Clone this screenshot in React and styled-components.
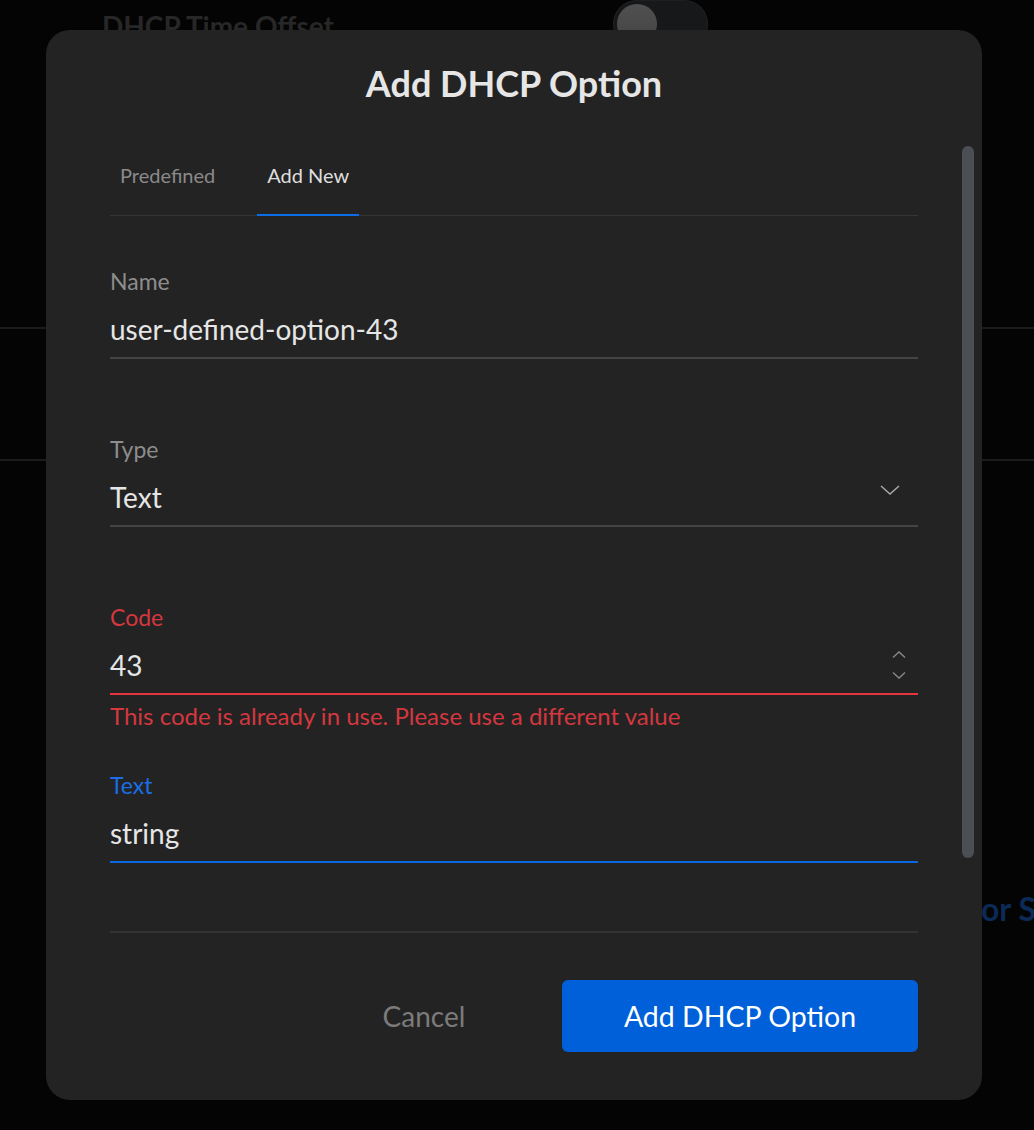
import React from "react";
import styled, { createGlobalStyle } from "styled-components";

const GlobalStyle = createGlobalStyle`
  html, body {
    margin: 0;
    padding: 0;
    background: #000;
    font-family: Lato, "Open Sans", sans-serif;
  }
  * { box-sizing: border-box; }
`;

const Screen = styled.div`
  position: relative;
  width: 1034px;
  height: 1130px;
  overflow: hidden;
  background: #040404;
`;

/* background page (dimmed) */
const Page = styled.div`
  display: flex;
  flex-direction: column;
  padding-left: 102px;
`;

const SettingRow = styled.div`
  display: flex;
  align-items: center;
  height: 48px;
`;

const SettingTitle = styled.div`
  width: 511px;
  font-size: 28px;
  font-weight: 700;
  color: #272727;
  margin-top: 3px;
`;

const Toggle = styled.div`
  position: relative;
  width: 95px;
  height: 48px;
  border-radius: 24px;
  background: #17181a;
  box-shadow: inset 0 0 0 1px #1e1f21;
`;

const Knob = styled.div`
  position: absolute;
  left: 4px;
  top: 4px;
  width: 40px;
  height: 40px;
  border-radius: 50%;
  background: linear-gradient(180deg, #505050, #444);
`;

const PageDivider = styled.div`
  height: 2px;
  background: #1b1b1b;
  margin-top: ${(p) => p.$top}px;
  margin-left: -102px;
`;

const PageLink = styled.div`
  margin-top: 429px;
  margin-left: 806px;
  white-space: nowrap;
  font-size: 32px;
  line-height: 38px;
  font-weight: 700;
  color: #0b2a55;
`;

/* modal */
const Dialog = styled.div`
  position: absolute;
  left: 46px;
  top: 30px;
  width: 936px;
  height: 1070px;
  border-radius: 24px;
  background: #232323;
  display: flex;
  flex-direction: column;
  padding: 33px 64px 48px;
`;

const Title = styled.h2`
  margin: 0;
  text-align: center;
  font-size: 36px;
  line-height: 40px;
  font-weight: 700;
  color: #e6e6e6;
`;

const ScrollThumb = styled.div`
  position: absolute;
  left: 916px;
  top: 116px;
  width: 12px;
  height: 712px;
  border-radius: 6px;
  background: #4b4e55;
`;

const Tabs = styled.div`
  display: flex;
  gap: 32px;
  margin-top: 60px;
  border-bottom: 1px solid #343434;
`;

const Tab = styled.div`
  padding: 0 10px 27px;
  font-size: 20px;
  line-height: 24px;
  color: ${(p) => (p.$active ? "#dedede" : "#8a8a8a")};
  border-bottom: 2px solid ${(p) => (p.$active ? "#0b6ee8" : "transparent")};
  margin-bottom: -1px;
`;

const Form = styled.div`
  display: flex;
  flex-direction: column;
  margin-top: 53px;
`;

const Field = styled.div`
  display: flex;
  flex-direction: column;
`;

const Label = styled.div`
  font-size: 23px;
  line-height: 24px;
  color: ${(p) => p.$color || "#8d8d8d"};
`;

const InputRow = styled.div`
  display: flex;
  align-items: center;
  margin-top: 20px;
  height: 46px;
  padding-bottom: 12px;
  border-bottom: 2px solid ${(p) => p.$line || "#444"};
`;

const Value = styled.div`
  flex: 1;
  font-size: 28px;
  line-height: 32px;
  color: #e6e6e6;
`;

const Helper = styled.div`
  height: 78px;
  padding-top: 9px;
  font-size: 24px;
  line-height: 24px;
  color: #d4373f;
`;

const Chevron = styled.svg`
  width: 20px;
  height: 10px;
  margin-right: 18px;
  margin-top: -14px;
`;

const Spinner = styled.div`
  display: flex;
  flex-direction: column;
  gap: 14px;
  margin-right: 12px;
`;

const Arrow = styled.svg`
  width: 14px;
  height: 7px;
  display: block;
`;

const FooterRule = styled.div`
  height: 2px;
  background: #333;
  margin-top: -10px;
`;

const Footer = styled.div`
  display: flex;
  justify-content: flex-end;
  align-items: center;
  gap: 40px;
  margin-top: 47px;
`;

const CancelButton = styled.button`
  width: 196px;
  height: 72px;
  border: none;
  background: transparent;
  font-family: inherit;
  font-size: 28px;
  color: #7b7b7b;
`;

const PrimaryButton = styled.button`
  width: 356px;
  height: 72px;
  border: none;
  border-radius: 6px;
  background: #0060d9;
  font-family: inherit;
  font-size: 28.5px;
  color: #fff;
`;

export default function App() {
  return (
    <>
      <GlobalStyle />
      <Screen>
        <Page>
          <SettingRow>
            <SettingTitle>DHCP Time Offset</SettingTitle>
            <Toggle>
              <Knob />
            </Toggle>
          </SettingRow>
          <PageDivider $top={279} />
          <PageDivider $top={130} />
          <PageLink>Vendor Settings</PageLink>
        </Page>

        <Dialog>
          <Title>Add DHCP Option</Title>
          <ScrollThumb />
          <Tabs>
            <Tab>Predefined</Tab>
            <Tab $active>Add New</Tab>
          </Tabs>
          <Form>
            <Field>
              <Label>Name</Label>
              <InputRow>
                <Value>user-defined-option-43</Value>
              </InputRow>
              <Helper />
            </Field>
            <Field>
              <Label>Type</Label>
              <InputRow>
                <Value>Text</Value>
                <Chevron viewBox="0 0 20 10" fill="none">
                  <path d="M1 1 L10 9 L19 1" stroke="#a8a8a8" strokeWidth="1.5" />
                </Chevron>
              </InputRow>
              <Helper />
            </Field>
            <Field>
              <Label $color="#d4373f">Code</Label>
              <InputRow $line="#e5353d">
                <Value>43</Value>
                <Spinner>
                  <Arrow viewBox="0 0 14 7" fill="none">
                    <path d="M1 6.5 L7 1 L13 6.5" stroke="#8a8a8a" strokeWidth="1.3" />
                  </Arrow>
                  <Arrow viewBox="0 0 14 7" fill="none">
                    <path d="M1 0.5 L7 6 L13 0.5" stroke="#8a8a8a" strokeWidth="1.3" />
                  </Arrow>
                </Spinner>
              </InputRow>
              <Helper>This code is already in use. Please use a different value</Helper>
            </Field>
            <Field>
              <Label $color="#1a6ee6">Text</Label>
              <InputRow $line="#0b66e4">
                <Value>string</Value>
              </InputRow>
              <Helper />
            </Field>
          </Form>
          <FooterRule />
          <Footer>
            <CancelButton>Cancel</CancelButton>
            <PrimaryButton>Add DHCP Option</PrimaryButton>
          </Footer>
        </Dialog>
      </Screen>
    </>
  );
}
